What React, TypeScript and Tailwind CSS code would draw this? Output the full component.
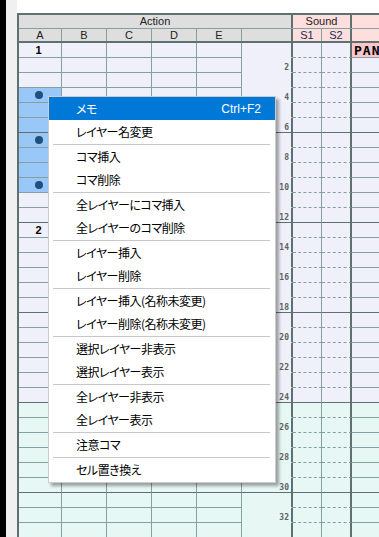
import React from 'react'

const THIN = 'border-[#86a0a0]'
const THICK = 'border-[#5e7070]'

type MenuEntry = { label: string; shortcut?: string; active?: boolean } | 'sep'

const menu: MenuEntry[] = [
  { label: 'メモ', shortcut: 'Ctrl+F2', active: true },
  { label: 'レイヤー名変更' },
  'sep',
  { label: 'コマ挿入' },
  { label: 'コマ削除' },
  'sep',
  { label: '全レイヤーにコマ挿入' },
  { label: '全レイヤーのコマ削除' },
  'sep',
  { label: 'レイヤー挿入' },
  { label: 'レイヤー削除' },
  'sep',
  { label: 'レイヤー挿入(名称未変更)' },
  { label: 'レイヤー削除(名称未変更)' },
  'sep',
  { label: '選択レイヤー非表示' },
  { label: '選択レイヤー表示' },
  'sep',
  { label: '全レイヤー非表示' },
  { label: '全レイヤー表示' },
  'sep',
  { label: '注意コマ' },
  'sep',
  { label: 'セル置き換え' },
]

const rows = Array.from({ length: 33 }, (_, i) => i + 1)
const dots = [4, 7, 10]

function BodyRow({ n }: { n: number }) {
  const block = n % 6 === 0
  const bg = n <= 24 ? 'bg-[#f0f0fa]' : 'bg-[#e6f7f4]'
  const selected = n >= 4 && n <= 10

  return (
    <div className={`flex h-[15px] shrink-0 ${bg}`}>
      {/* A */}
      <div
        className={`w-[43px] border-r border-b ${THIN} ${block ? 'border-b-[#5e7070]' : ''} flex items-center justify-center pr-[3px] ${selected ? 'bg-[#99c8f8]' : ''}`}
      >
        {dots.includes(n) && <div className="w-[8px] h-[8px] rounded-full bg-[#1e4f7e]" />}
        {n === 1 && <span className="text-[11px] font-bold leading-none text-black">1</span>}
        {n === 13 && <span className="text-[11px] font-bold leading-none text-black">2</span>}
      </div>
      {['B', 'C', 'D', 'E'].map((c) => (
        <div key={c} className={`w-[45px] border-r border-b ${THIN} ${block ? 'border-b-[#5e7070]' : ''}`} />
      ))}
      {/* frame numbers */}
      <div
        className={`w-[51px] border-r-2 border-r-[#5e7070] border-b ${block ? 'border-b-[#5e7070]' : 'border-b-transparent'} flex items-end justify-end pr-[2px]`}
      >
        {n % 2 === 0 && (
          <span className="text-[8px] leading-[9px] font-bold text-[#5a6464] font-['DejaVu_Sans_Mono',monospace]">{n}</span>
        )}
      </div>
      {/* S1 */}
      <div
        className={`w-[29px] border-r border-r-[#86a0a0] border-b ${block ? 'border-b-[#5e7070]' : 'border-b-[#86a0a0] [border-bottom-style:dashed]'}`}
      />
      {/* S2 */}
      <div
        className={`w-[30px] border-r-2 border-r-[#5e7070] border-b ${block ? 'border-b-[#5e7070]' : 'border-b-[#86a0a0] [border-bottom-style:dashed]'}`}
      />
      {/* PAN column */}
      <div
        className={`flex-1 border-b ${block ? 'border-b-[#5e7070]' : 'border-b-[#86a0a0]'} ${n === 1 ? 'bg-[#fcc6cb]' : ''} flex items-center pl-[2px] overflow-hidden`}
      >
        {n === 1 && (
          <span className="text-[13px] font-bold leading-none tracking-[1px] text-black font-['DejaVu_Sans_Mono',monospace]">
            PAN
          </span>
        )}
      </div>
    </div>
  )
}

export default function App() {
  return (
    <div className="relative w-[379px] h-[537px] overflow-hidden bg-white flex font-['Liberation_Sans',sans-serif]">
      <div className="w-[6px] bg-black shrink-0" />
      <div className="w-[11px] bg-[#f0f0f0] shrink-0" />

      <div className="flex-1 flex flex-col pt-[13px] min-w-0">
        <div className={`flex flex-col border-t-2 border-l-2 ${THICK}`}>
          {/* header row 1 */}
          <div className={`flex h-[14px] border-b ${THIN} text-[11px] text-[#222] leading-none`}>
            <div className={`w-[274px] border-r-2 ${THICK} bg-[#dedede] flex items-center justify-center`}>Action</div>
            <div className={`w-[59px] border-r-2 ${THICK} bg-[#ffdede] flex items-center justify-center`}>Sound</div>
            <div className="flex-1 bg-[#ffdede]" />
          </div>
          {/* header row 2 */}
          <div className={`flex h-[14px] border-b-2 ${THICK} text-[11px] text-[#222] leading-none`}>
            {['A', 'B', 'C', 'D', 'E'].map((c, i) => (
              <div
                key={c}
                className={`${i === 0 ? 'w-[43px]' : 'w-[45px]'} border-r ${THIN} bg-[#dedede] flex items-center justify-center`}
              >
                {c}
              </div>
            ))}
            <div className={`w-[51px] border-r-2 ${THICK} bg-[#dedede]`} />
            <div className={`w-[29px] border-r ${THIN} bg-[#ffdede] flex items-center justify-center text-[#1c2a52]`}>S1</div>
            <div className={`w-[30px] border-r-2 ${THICK} bg-[#ffdede] flex items-center justify-center text-[#1c2a52]`}>S2</div>
            <div className="flex-1 bg-[#ffdede]" />
          </div>

          {rows.map((n) => (
            <BodyRow key={n} n={n} />
          ))}
        </div>
      </div>

      {/* context menu */}
      <div className="absolute left-[48px] top-[96px] w-[228px] bg-white border border-[#cccccc] pb-[1px] shadow-[3px_3px_3px_rgba(0,0,0,0.35)] font-['Noto_Sans_CJK_JP',sans-serif] text-[12px] text-black [font-feature-settings:'palt']">
        {menu.map((m, i) =>
          m === 'sep' ? (
            <div key={i} className="h-[2px] flex items-end">
              <div className="h-px flex-1 ml-[4px] mr-[5px] bg-[#c8c8c8]" />
            </div>
          ) : (
            <div
              key={i}
              className={`h-[23px] flex items-center justify-between pl-[27px] pr-[14px] ${m.active ? 'bg-[#0078d7] text-white' : ''}`}
            >
              <span className="tracking-[-0.5px]">{m.label}</span>
              {m.shortcut && <span className="font-['Liberation_Sans',sans-serif] text-[12px]">{m.shortcut}</span>}
            </div>
          )
        )}
      </div>
    </div>
  )
}
